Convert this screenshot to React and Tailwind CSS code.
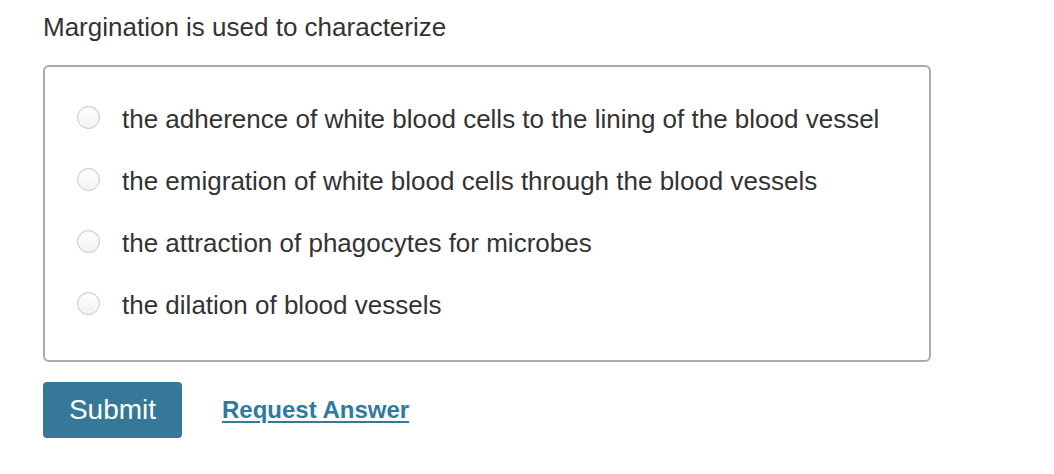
import React from "react";

const options = [
  "the adherence of white blood cells to the lining of the blood vessel",
  "the emigration of white blood cells through the blood vessels",
  "the attraction of phagocytes for microbes",
  "the dilation of blood vessels",
];

function Radio() {
  return (
    <span className="block w-[23px] h-[23px] mb-[4px] shrink-0 rounded-full border border-[#c6c6c6] bg-gradient-to-b from-white to-[#f2f2f2] shadow-[inset_0_1px_1px_rgba(0,0,0,0.06)]" />
  );
}

export default function App() {
  return (
    <div className="w-[1054px] h-[474px] bg-white pl-[43px] pt-[10px] font-['Liberation_Sans',Arial,sans-serif] text-[#333]">
      <h2 className="text-[26px] leading-[34px]">Margination is used to characterize</h2>

      <div className="mt-[21px] w-[888px] h-[297px] rounded-[6px] border-2 border-[#aaa] pt-[21px] pl-[32px]">
        {options.map((opt) => (
          <label key={opt} className="flex items-center h-[62px] gap-[22px] cursor-pointer">
            <Radio />
            <span className="text-[26px] leading-[30px]">{opt}</span>
          </label>
        ))}
      </div>

      <div className="mt-[20px] flex items-center gap-[40px]">
        <button className="w-[139px] h-[56px] rounded-[4px] bg-[#357898] text-white text-[28px] leading-none">
          Submit
        </button>
        <a href="#" className="text-[24px] font-bold text-[#2e7aa0] underline underline-offset-[3px]">
          Request Answer
        </a>
      </div>
    </div>
  );
}
